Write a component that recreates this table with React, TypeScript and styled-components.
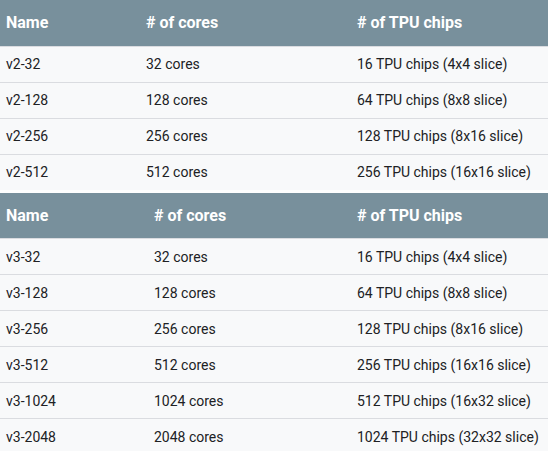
import styled, { createGlobalStyle } from 'styled-components'

const GlobalStyle = createGlobalStyle`
   body {
      margin: 0;
      background: #fff;
      font-family: Roboto, 'Liberation Sans', sans-serif;
   }
`

const Table = styled.table`
   width: 548px;
   border-collapse: collapse;
   table-layout: fixed;
   & + & {
      margin-top: 3px;
   }
`

const HeadCell = styled.th<{ $width?: number }>`
   width: ${({ $width }) => ($width ? `${$width}px` : 'auto')};
   height: 46px;
   padding: 0 6px;
   box-sizing: border-box;
   background: #78909c;
   color: #fff;
   font-size: 16px;
   font-weight: 700;
   text-align: left;
   vertical-align: middle;
`

const Cell = styled.td`
   height: 35px;
   padding: 0 6px;
   background: #f8f9fa;
   border-top: 1px solid #dadce0;
   color: #202124;
   font-size: 14px;
   vertical-align: middle;
   white-space: nowrap;
`

type Row = [string, string, string]

const v2Rows: Row[] = [
   ['v2-32', '32 cores', '16 TPU chips (4x4 slice)'],
   ['v2-128', '128 cores', '64 TPU chips (8x8 slice)'],
   ['v2-256', '256 cores', '128 TPU chips (8x16 slice)'],
   ['v2-512', '512 cores', '256 TPU chips (16x16 slice)'],
]

const v3Rows: Row[] = [
   ['v3-32', '32 cores', '16 TPU chips (4x4 slice)'],
   ['v3-128', '128 cores', '64 TPU chips (8x8 slice)'],
   ['v3-256', '256 cores', '128 TPU chips (8x16 slice)'],
   ['v3-512', '512 cores', '256 TPU chips (16x16 slice)'],
   ['v3-1024', '1024 cores', '512 TPU chips (16x32 slice)'],
   ['v3-2048', '2048 cores', '1024 TPU chips (32x32 slice)'],
]

const SliceTable = ({ rows, widths }: { rows: Row[]; widths: [number, number] }) => (
   <Table>
      <thead>
         <tr>
            <HeadCell $width={widths[0]}>Name</HeadCell>
            <HeadCell $width={widths[1]}># of cores</HeadCell>
            <HeadCell># of TPU chips</HeadCell>
         </tr>
      </thead>
      <tbody>
         {rows.map(row => (
            <tr key={row[0]}>
               {row.map(value => (
                  <Cell key={value}>{value}</Cell>
               ))}
            </tr>
         ))}
      </tbody>
   </Table>
)

const App = () => (
   <>
      <GlobalStyle />
      <SliceTable rows={v2Rows} widths={[140, 211]} />
      <SliceTable rows={v3Rows} widths={[148, 203]} />
   </>
)

export default App
